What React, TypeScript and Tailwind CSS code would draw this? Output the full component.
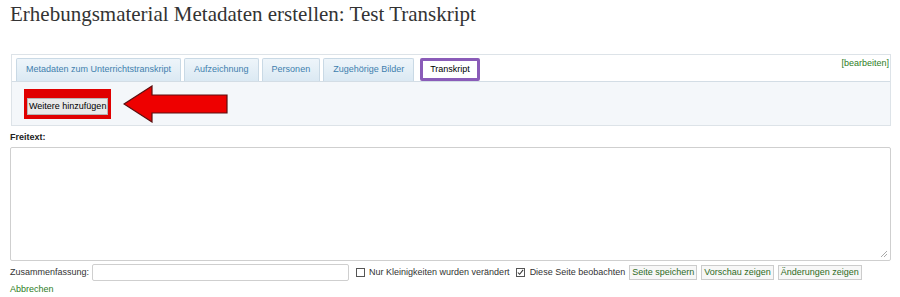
import React from "react";

const tabs = [
  "Metadaten zum Unterrichtstranskript",
  "Aufzeichnung",
  "Personen",
  "Zugehörige Bilder",
];

function RedArrow() {
  return (
    <svg width="106" height="38" viewBox="0 0 106 38" className="block">
      <polygon
        points="1,19 29,1 29,10 104,10 104,28 29,28 29,37"
        fill="#ee0000"
        stroke="#5a1010"
        strokeWidth="1.2"
        strokeLinejoin="miter"
      />
    </svg>
  );
}

function FormButton({ label }: { label: string }) {
  return (
    <button className="ml-[4px] h-[15px] px-[2px] whitespace-nowrap text-[9px] leading-[13px] text-[#2e6b1e] bg-[#f7f7f7] border border-[#cccccc]">
      {label}
    </button>
  );
}

export default function App() {
  return (
    <div
      className="w-[900px] h-[297px] bg-white text-[#222] overflow-hidden"
      style={{ fontFamily: '"Liberation Sans", Arial, sans-serif' }}
    >
      {/* Title */}
      <h1
        className="pl-[10px] pt-[1px] text-[21px] leading-[26px] text-[#333] whitespace-nowrap"
        style={{ fontFamily: '"Liberation Serif", "Times New Roman", serif' }}
      >
        Erhebungsmaterial Metadaten erstellen: Test Transkript
      </h1>

      {/* Tab box */}
      <div className="mt-[27px] ml-[11px] w-[880px] border border-[#dde3e8] bg-white">
        <div className="relative flex items-end gap-[3px] pl-[4px] pt-[3px] border-b border-[#d3dde5]">
          {tabs.map((t) => (
            <div
              key={t}
              className="h-[23px] px-[9px] flex items-center whitespace-nowrap text-[9px] text-[#3f7fae] bg-gradient-to-b from-[#eef5fa] to-[#dbe9f3] border border-b-0 border-[#c9d9e5] rounded-t-[2px]"
            >
              {t}
            </div>
          ))}
          <div className="ml-[3px] h-[23px] px-[7px] flex items-center whitespace-nowrap text-[9px] text-black bg-white border-[3px] border-[#8a5cb8] rounded-[2px]">
            Transkript
          </div>
          <a className="absolute right-[1px] top-[3px] text-[9px] leading-[10px] text-[#2e7d1e]">
            [bearbeiten]
          </a>
        </div>
        <div className="h-[43px] bg-[#f4f7fa] flex items-center pl-[12px] gap-[12px]">
          <div className="border-[3px] border-[#e00000] bg-[#e00000]">
            <button className="h-[17px] px-[1px] whitespace-nowrap text-[9px] leading-[15px] text-black bg-[#e9e9e9] border border-[#b5b5b5]">
              Weitere hinzufügen
            </button>
          </div>
          <RedArrow />
        </div>
      </div>

      {/* Freitext */}
      <div className="pl-[10px] mt-[6px] text-[9px] font-bold leading-[11px] text-[#222]">
        Freitext:
      </div>
      <div className="mt-[4px] ml-[10px] w-[881px] h-[114px] border border-[#cfcfcf] rounded-[2px] bg-white relative">
        <svg
          width="8"
          height="8"
          viewBox="0 0 8 8"
          className="absolute right-[2px] bottom-[2px]"
        >
          <path d="M7 1 L1 7 M7 4 L4 7" stroke="#aaa" strokeWidth="1" />
        </svg>
      </div>

      {/* Summary row */}
      <div className="mt-[3px] pl-[10px] flex items-center h-[17px] whitespace-nowrap text-[9px] text-[#333]">
        <span>Zusammenfassung:</span>
        <input
          className="ml-[3px] w-[257px] h-[17px] border border-[#cfcfcf] rounded-[2px] bg-white"
          readOnly
        />
        <span className="ml-[7px] w-[9px] h-[9px] border border-[#555] bg-white" />
        <span className="ml-[4px]">Nur Kleinigkeiten wurden verändert</span>
        <span className="ml-[6px] w-[9px] h-[9px] border border-[#555] bg-white flex items-center justify-center">
          <svg width="7" height="7" viewBox="0 0 8 8">
            <path d="M1 4 L3 6 L7 1" stroke="#333" strokeWidth="1.2" fill="none" />
          </svg>
        </span>
        <span className="ml-[5px]">Diese Seite beobachten</span>
        <FormButton label="Seite speichern" />
        <FormButton label="Vorschau zeigen" />
        <FormButton label="Änderungen zeigen" />
      </div>
      <div className="pl-[10px] mt-[2px] text-[9px] leading-[12px] text-[#2e7d1e]">
        Abbrechen
      </div>
    </div>
  );
}
